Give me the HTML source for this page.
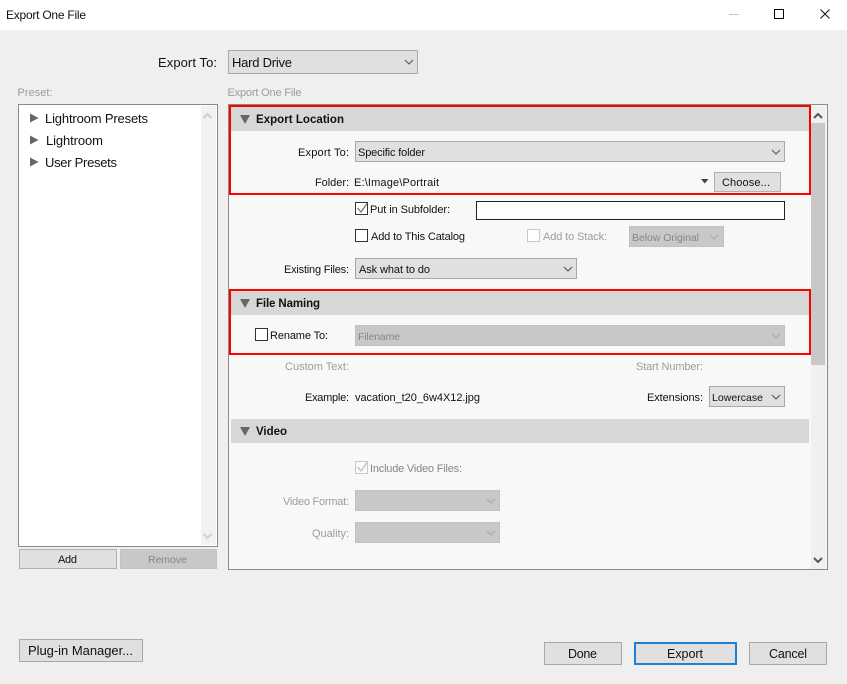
<!DOCTYPE html>
<html><head><meta charset="utf-8"><title>Export One File</title>
<style>
html,body{margin:0;padding:0;background:#efefef;width:847px;height:684px;overflow:hidden}
svg{display:block}
text{font-family:"Liberation Sans",Arial,sans-serif;font-size:11px;fill:#111}
.g{fill:#9c9c9c}.m{fill:#868686}
.s{font-size:10.500px}
.b{font-weight:bold;font-size:11.5px;fill:#111}
.l{font-size:13px}
rect{shape-rendering:crispEdges}
.ch{fill:none;stroke:#555;stroke-width:1.1}
.cd{fill:none;stroke:#a8a8a8;stroke-width:1.1}
</style></head><body>
<svg width="847" height="684" viewBox="0 0 847 684" xmlns="http://www.w3.org/2000/svg">
<rect x="0" y="0" width="847" height="684" fill="#efefef"/>
<rect x="0" y="0" width="847" height="30" fill="#fff"/>
<text x="6" y="19" textLength="80" style="font-size:12px">Export One File</text>
<rect x="729" y="14" width="10" height="1" fill="#c8c8c8"/>
<rect x="774.5" y="9.5" width="9" height="9" fill="none" stroke="#000" style="shape-rendering:auto"/>
<path d="M820.5 9.5L829.5 18.5M829.5 9.5L820.5 18.5" stroke="#111" stroke-width="1" fill="none"/>

<text x="158" y="67" textLength="59" class="l">Export To:</text>
<rect x="228.5" y="50.5" width="189" height="23" fill="#e0e0e0" stroke="#a8a8a8"/>
<text x="232" y="67" textLength="60" class="l">Hard Drive</text>
<path class="ch" d="M405 60l4 4 4-4"/>

<text x="17.500" y="96" textLength="35" class="g">Preset:</text>
<text x="227.500" y="96" textLength="74" class="g">Export One File</text>

<!-- preset list -->
<rect x="18.500" y="104.500" width="199" height="442" fill="#fff" stroke="#8a8a8a"/>
<rect x="201" y="106" width="15" height="439" fill="#f2f2f2"/>
<path d="M203.500 118l4-4 4 4" fill="none" stroke="#d0d0d0" stroke-width="2"/>
<path d="M203.500 534l4 4 4-4" fill="none" stroke="#d0d0d0" stroke-width="2"/>
<path d="M30 113.500l8.500 4.500-8.500 4.500z" fill="#666"/>
<path d="M30 135.500l8.500 4.500-8.500 4.500z" fill="#666"/>
<path d="M30 157.500l8.500 4.500-8.500 4.500z" fill="#666"/>
<text x="45" y="123" textLength="103" class="l">Lightroom Presets</text>
<text x="46" y="145" textLength="57" class="l">Lightroom</text>
<text x="45" y="167" textLength="72" class="l">User Presets</text>

<rect x="19.500" y="549.500" width="97" height="19" fill="#e0e0e0" stroke="#b0b0b0"/>
<text x="58" y="563" textLength="19">Add</text>
<rect x="120.500" y="549.500" width="96" height="19" fill="#c8c8c8" stroke="#c2c2c2"/>
<text x="148" y="563" textLength="39" class="m s">Remove</text>

<!-- main panel -->
<rect x="228.500" y="104.500" width="599" height="465" fill="#f8f8f8" stroke="#8a8a8a"/>
<rect x="811" y="106" width="15" height="463" fill="#f0f0f0"/>
<rect x="811" y="123" width="14" height="242" fill="#c8c8c8"/>
<path d="M814 118l4-4 4 4" fill="none" stroke="#555" stroke-width="2"/>
<path d="M814 558l4 4 4-4" fill="none" stroke="#555" stroke-width="2"/>

<!-- section 1 -->
<rect x="231" y="107" width="578" height="24" fill="#d7d7d7"/>
<path d="M240 115h10l-5 9z" fill="#666"/>
<text x="256" y="123" textLength="88" class="b">Export Location</text>
<text x="298" y="156" textLength="51">Export To:</text>
<rect x="355.500" y="141.500" width="429" height="20" fill="#e0e0e0" stroke="#a8a8a8"/>
<text x="358" y="156" textLength="67">Specific folder</text>
<path class="ch" d="M772 150l4 4 4-4"/>
<text x="315" y="186" textLength="34">Folder:</text>
<text x="354" y="186" textLength="85">E:\Image\Portrait</text>
<path d="M701 179h7.500l-3.750 4.500z" fill="#444"/>
<rect x="714.500" y="172.500" width="66" height="19" fill="#e0e0e0" stroke="#b0b0b0"/>
<text x="722" y="186" textLength="48">Choose...</text>

<rect x="355.500" y="202.500" width="12" height="12" fill="#fff" stroke="#333"/>
<path d="M357.500 208l3.500 4 6-8.500" fill="none" stroke="#777" stroke-width="1.300"/>
<text x="370" y="213" textLength="80">Put in Subfolder:</text>
<rect x="476.500" y="201.500" width="308" height="18" fill="#fff" stroke="#222"/>

<rect x="355.500" y="229.500" width="12" height="12" fill="#fff" stroke="#333"/>
<text x="371" y="240" textLength="94">Add to This Catalog</text>
<rect x="527.500" y="229.500" width="12" height="12" fill="#fff" stroke="#c8c8c8"/>
<text x="543" y="240" textLength="64" class="g">Add to Stack:</text>
<rect x="629.500" y="226.500" width="94" height="20" fill="#c8c8c8" stroke="#c0c0c0"/>
<text x="632" y="241" textLength="67" class="m s">Below Original</text>
<path class="cd" d="M710 235l4 4 4-4"/>

<text x="284" y="273" textLength="65">Existing Files:</text>
<rect x="355.500" y="258.500" width="221" height="20" fill="#e0e0e0" stroke="#a8a8a8"/>
<text x="359" y="273" textLength="71">Ask what to do</text>
<path class="ch" d="M564 267l4 4 4-4"/>

<!-- section 2 -->
<rect x="231" y="291" width="578" height="24" fill="#d7d7d7"/>
<path d="M240 299h10l-5 9z" fill="#666"/>
<text x="256" y="307" textLength="64" class="b">File Naming</text>
<rect x="255.500" y="328.500" width="12" height="12" fill="#fff" stroke="#333"/>
<text x="270" y="339" textLength="58">Rename To:</text>
<rect x="355.500" y="325.500" width="429" height="20" fill="#c8c8c8" stroke="#c0c0c0"/>
<text x="358" y="340" textLength="42" class="m s">Filename</text>
<path class="cd" d="M772 334l4 4 4-4"/>

<text x="285" y="370" textLength="64" class="g">Custom Text:</text>
<text x="636" y="370" textLength="67" class="g">Start Number:</text>
<text x="305" y="401" textLength="44">Example:</text>
<text x="355" y="401" textLength="125">vacation_t20_6w4X12.jpg</text>
<text x="647" y="401" textLength="56">Extensions:</text>
<rect x="709.500" y="386.500" width="75" height="20" fill="#e0e0e0" stroke="#a8a8a8"/>
<text x="712" y="401" textLength="51" class="s">Lowercase</text>
<path class="ch" d="M772 395l4 4 4-4"/>

<!-- section 3 -->
<rect x="231" y="419" width="578" height="24" fill="#d7d7d7"/>
<path d="M240 427h10l-5 9z" fill="#666"/>
<text x="256" y="435" textLength="31" class="b">Video</text>
<rect x="355.500" y="461.500" width="12" height="12" fill="#fbfbfb" stroke="#c8c8c8"/>
<path d="M357.500 467l3.500 4 6-8.500" fill="none" stroke="#bdbdbd" stroke-width="1.300"/>
<text x="370" y="472" textLength="92" class="m">Include Video Files:</text>
<text x="283" y="505" textLength="66" class="g">Video Format:</text>
<rect x="355.500" y="490.500" width="144" height="20" fill="#c8c8c8" stroke="#c0c0c0"/>
<path class="cd" d="M487 499l4 4 4-4"/>
<text x="312" y="537" textLength="37" class="g">Quality:</text>
<rect x="355.500" y="522.500" width="144" height="20" fill="#c8c8c8" stroke="#c0c0c0"/>
<path class="cd" d="M487 531l4 4 4-4"/>

<!-- red annotation boxes -->
<rect x="230" y="106" width="580" height="88" fill="none" stroke="#fe0000" stroke-width="2"/>
<rect x="230" y="290" width="580" height="64" fill="none" stroke="#fe0000" stroke-width="2"/>

<!-- bottom buttons -->
<rect x="19.500" y="639.500" width="123" height="22" fill="#e0e0e0" stroke="#a8a8a8"/>
<text x="28" y="655" textLength="105" class="l">Plug-in Manager...</text>
<rect x="544.500" y="642.500" width="77" height="22" fill="#e0e0e0" stroke="#a8a8a8"/>
<text x="568" y="658" textLength="29" style="font-size:12.5px">Done</text>
<rect x="635" y="643" width="101" height="21" fill="#e0e0e0" stroke="#1e7fd4" stroke-width="2"/>
<text x="667" y="658" textLength="36" style="font-size:12.5px">Export</text>
<rect x="749.500" y="642.500" width="77" height="22" fill="#e0e0e0" stroke="#a8a8a8"/>
<text x="769" y="658" textLength="38" style="font-size:12.5px">Cancel</text>
</svg>
</body></html>
